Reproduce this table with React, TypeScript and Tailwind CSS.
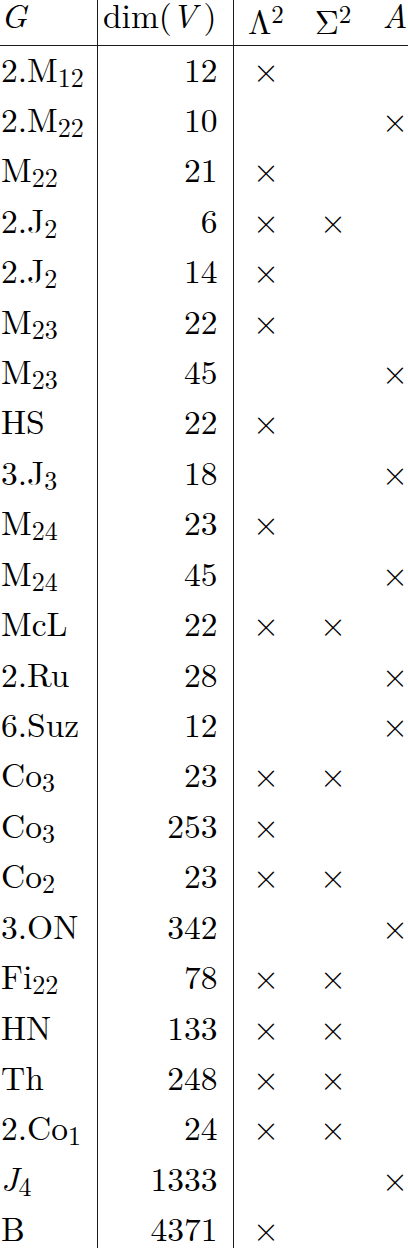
import type { ReactNode } from 'react'

type Row = {
  g:   ReactNode
  dim: string
  l?:  boolean
  s?:  boolean
  a?:  boolean
}

const Sub = ({ children }: { children: ReactNode }) => (
  <span className="text-[26px] leading-none align-[-4.5px]">{children}</span>
)

const Sup = ({ children }: { children: ReactNode }) => (
  <span className="text-[25px] leading-none align-[11px]">{children}</span>
)

const ROWS: Row[] = [
  { g: <>2.M<Sub>12</Sub></>, dim: '12',   l: true },
  { g: <>2.M<Sub>22</Sub></>, dim: '10',   a: true },
  { g: <>M<Sub>22</Sub></>,   dim: '21',   l: true },
  { g: <>2.J<Sub>2</Sub></>,  dim: '6',    l: true, s: true },
  { g: <>2.J<Sub>2</Sub></>,  dim: '14',   l: true },
  { g: <>M<Sub>23</Sub></>,   dim: '22',   l: true },
  { g: <>M<Sub>23</Sub></>,   dim: '45',   a: true },
  { g: 'HS',                  dim: '22',   l: true },
  { g: <>3.J<Sub>3</Sub></>,  dim: '18',   a: true },
  { g: <>M<Sub>24</Sub></>,   dim: '23',   l: true },
  { g: <>M<Sub>24</Sub></>,   dim: '45',   a: true },
  { g: 'McL',                 dim: '22',   l: true, s: true },
  { g: '2.Ru',                dim: '28',   a: true },
  { g: '6.Suz',               dim: '12',   a: true },
  { g: <>Co<Sub>3</Sub></>,   dim: '23',   l: true, s: true },
  { g: <>Co<Sub>3</Sub></>,   dim: '253',  l: true },
  { g: <>Co<Sub>2</Sub></>,   dim: '23',   l: true, s: true },
  { g: '3.ON',                dim: '342',  a: true },
  { g: <>Fi<Sub>22</Sub></>,  dim: '78',   l: true, s: true },
  { g: 'HN',                  dim: '133',  l: true, s: true },
  { g: 'Th',                  dim: '248',  l: true, s: true },
  { g: <>2.Co<Sub>1</Sub></>, dim: '24',   l: true, s: true },
  { g: <><i>J</i><Sub>4</Sub></>, dim: '1333', a: true },
  { g: 'B',                   dim: '4371', l: true },
]

const X = '\u00d7'

export default function App() {
  return (
    <div
      className="w-[408px] h-[1248px] overflow-hidden bg-white text-black text-[33.5px]"
      style={{ fontFamily: '"Latin Modern Roman", "Latin Modern Math", "Liberation Serif", serif' }}
    >
      {/* header */}
      <div className="flex h-[45.5px] leading-[29.6px] border-b-[1.5px] border-[#1c1c1c]">
        <div className="w-[98px] shrink-0 pl-[1px] border-r-[1.5px] border-[#1c1c1c]">
          <i>G</i>
        </div>
        <div className="w-[135.5px] shrink-0 pr-[16px] text-right border-r-[1.5px] border-[#1c1c1c] whitespace-nowrap">
          dim(<i>V</i>{'\u2009'})
        </div>
        <div className="w-[65px] shrink-0 text-center whitespace-nowrap">Λ<Sup>2</Sup></div>
        <div className="w-[69px] shrink-0 text-center whitespace-nowrap">Σ<Sup>2</Sup></div>
        <div className="w-[55px] shrink-0 text-center"><i>A</i></div>
      </div>

      {ROWS.map((r, i) => (
        <div key={i} className="flex h-[50.43px] leading-[44.6px]">
          <div className="w-[98px] shrink-0 pl-[1px] whitespace-nowrap border-r-[1.5px] border-[#1c1c1c]">
            {r.g}
          </div>
          <div className="w-[135.5px] shrink-0 pr-[15px] text-right border-r-[1.5px] border-[#1c1c1c]">
            {r.dim}
          </div>
          <div className="w-[65px] shrink-0 text-center">{r.l ? X : ''}</div>
          <div className="w-[69px] shrink-0 text-center">{r.s ? X : ''}</div>
          <div className="w-[55px] shrink-0 text-center">{r.a ? X : ''}</div>
        </div>
      ))}
    </div>
  )
}
